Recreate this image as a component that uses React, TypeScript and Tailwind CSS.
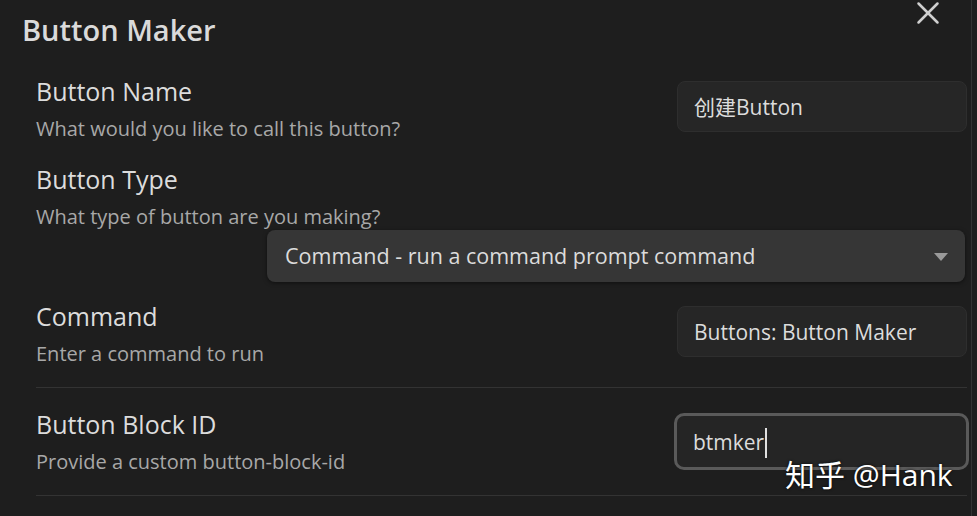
import { X } from 'lucide-react'

const font = { fontFamily: '"Open Sans", "Noto Sans CJK SC", sans-serif' }

function Info({ name, desc }: { name: string; desc: string }) {
  return (
    <div className="flex flex-col">
      <div className="text-[25px] leading-[34px] text-[#dcdcdc]">{name}</div>
      <div className="text-[20px] leading-[28px] text-[#a8a8a8] mt-[7px]">{desc}</div>
    </div>
  )
}

function TextBox({ value, focused }: { value: string; focused?: boolean }) {
  return (
    <div
      className={
        focused
          ? 'w-[295px] h-[57px] rounded-[10px] border-[3px] border-[#5a5a5a] bg-[#252525] flex items-center pl-[16px] pt-[2px] text-[21px] text-[#dcdcdc]'
          : 'w-[290px] h-[51px] rounded-[8px] border border-[#2e2e2e] bg-[#262626] flex items-center pl-[16px] pt-[3px] text-[21px] text-[#dcdcdc]'
      }
    >
      {value}
      {focused && <span className="w-[2px] h-[30px] bg-[#e0e0e0] ml-[1px]" />}
    </div>
  )
}

export default function App() {
  return (
    <div className="w-[977px] h-[516px] bg-[#1e1e1e] overflow-hidden relative flex" style={font}>
      <div className="w-[972px] shrink-0 border-r border-[#333] flex flex-col">
        <div className="flex items-start justify-between pl-[22px] pr-[24px] pt-[8px] h-[74px]">
          <h1 className="text-[29px] leading-[44px] font-semibold text-[#dadada]">Button Maker</h1>
          <X size={38} strokeWidth={1.6} className="text-[#cfcfcf] mt-[-14px]" />
        </div>

        <div className="pl-[36px] pr-[4px] flex flex-col">
          <div className="flex items-start justify-between h-[88px]">
            <Info name="Button Name" desc="What would you like to call this button?" />
            <div className="mt-[7px]"><TextBox value="创建Button" /></div>
          </div>

          <div className="flex flex-col">
            <Info name="Button Type" desc="What type of button are you making?" />
            <div className="self-end mr-[2px] mt-[-1px] w-[698px] h-[52px] rounded-[8px] bg-[#363636] shadow-[0_1px_4px_rgba(0,0,0,0.5)] flex items-center justify-between pl-[18px] pr-[16px] pt-[1px] text-[21.5px] text-[#dcdcdc]">
              <span>Command - run a command prompt command</span>
              <svg width="16" height="10" viewBox="0 0 16 10"><path d="M1 1h14L8 9z" fill="#9a9a9a" /></svg>
            </div>
          </div>

          <div className="flex items-start justify-between mt-[17px] pb-[19px] border-b border-[#333]">
            <Info name="Command" desc="Enter a command to run" />
            <div className="mt-[7px]"><TextBox value="Buttons: Button Maker" /></div>
          </div>

          <div className="flex items-start justify-between pt-[19px] pb-[19px] border-b border-[#333]">
            <Info name="Button Block ID" desc="Provide a custom button-block-id" />
            <div className="mt-[6px] mr-[-2px]"><TextBox value="btmker" focused /></div>
          </div>
        </div>
      </div>
      <div className="absolute left-[785px] top-[452px] text-[30px] text-white [text-shadow:0_0_3px_rgba(0,0,0,0.9)]">知乎 @Hank</div>
    </div>
  )
}
